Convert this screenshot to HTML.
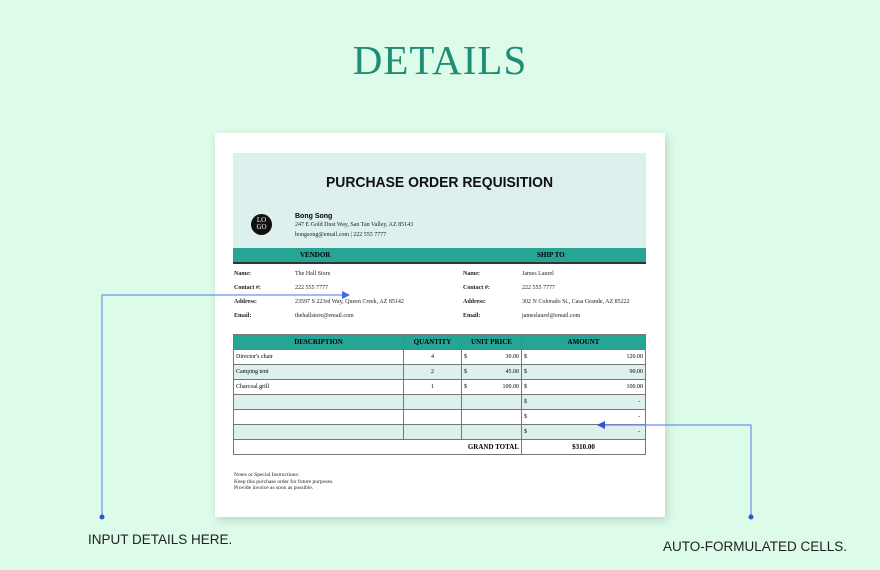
<!DOCTYPE html><html><head><style>
body{margin:0;width:880px;height:570px;background:#dcfbe8;position:relative;overflow:hidden;font-family:"Liberation Serif",serif}
.a{position:absolute}
.t{position:absolute;left:0;width:880px;top:36px;text-align:center;font-size:41px;color:#1f8c76;letter-spacing:1px}
.card{left:215px;top:133px;width:450px;height:384px;background:#fff;box-shadow:2px 3px 8px rgba(0,0,0,.15)}
.s{font-size:6px;color:#222}
.b{font-weight:bold}
table{border-collapse:collapse;position:absolute;left:233px;top:334px;width:413px;font-size:6px}
td{border:1px solid #777;height:14px;padding:0 2px}
tr.h td{background:#26a596;font-weight:bold;text-align:center;font-size:7px}
tr.g td{background:#ddf0ee}
.r{text-align:right}
</style></head><body>
<div class="t">DETAILS</div>
<div class="a card"></div>
<div class="a" style="left:233px;top:153px;width:413px;height:95px;background:#ddf0ee"></div>
<div class="a" style="left:233px;top:174px;width:413px;text-align:center;font:bold 15px 'Liberation Sans',sans-serif;color:#111;transform:scaleX(0.93)">PURCHASE ORDER REQUISITION</div>
<div class="a" style="left:251px;top:214px;width:21px;height:21px;border-radius:50%;background:#111;color:#fff;font-size:7px;line-height:7px;text-align:center;padding-top:3px;box-sizing:border-box">LO<br>GO</div>
<div class="a b" style="left:295px;top:213px;font:bold 7px 'Liberation Sans',sans-serif">Bong Song</div>
<div class="a s" style="left:295px;top:222px">247 E Gold Dust Way, San Tan Valley, AZ 85143</div>
<div class="a s" style="left:295px;top:232px">bongsong@email.com | 222 555 7777</div>
<div class="a" style="left:233px;top:248px;width:413px;height:14px;background:#26a596;border-bottom:2px solid #333"></div>
<div class="a b" style="left:300px;top:251px;font-size:7px">VENDOR</div>
<div class="a b" style="left:537px;top:251px;font-size:7px">SHIP TO</div>
<div class="a s b" style="left:234px;top:267px;line-height:14px">Name:<br>Contact #:<br>Address:<br>Email:</div>
<div class="a s" style="left:295px;top:267px;line-height:14px">The Hall Store<br>222 555 7777<br>23597 S 223rd Way, Queen Creek, AZ 85142<br>thehallstore@email.com</div>
<div class="a s b" style="left:463px;top:267px;line-height:14px">Name:<br>Contact #:<br>Address:<br>Email:</div>
<div class="a s" style="left:522px;top:267px;line-height:14px">James Laurel<br>222 555 7777<br>302 N Colorado St., Casa Grande, AZ 85222<br>jameslaurel@email.com</div>
<table>
<tr class="h"><td style="width:165px">DESCRIPTION</td><td style="width:53px">QUANTITY</td><td style="width:55px">UNIT PRICE</td><td>AMOUNT</td></tr>
<tr><td>Director's chair</td><td style="text-align:center">4</td><td>$<span style="float:right">30.00</span></td><td>$<span style="float:right">120.00</span></td></tr>
<tr class="g"><td>Camping tent</td><td style="text-align:center">2</td><td>$<span style="float:right">45.00</span></td><td>$<span style="float:right">90.00</span></td></tr>
<tr><td>Charcoal grill</td><td style="text-align:center">1</td><td>$<span style="float:right">100.00</span></td><td>$<span style="float:right">100.00</span></td></tr>
<tr class="g"><td></td><td></td><td></td><td>$<span style="float:right">-&nbsp;&nbsp;</span></td></tr>
<tr><td></td><td></td><td></td><td>$<span style="float:right">-&nbsp;&nbsp;</span></td></tr>
<tr class="g"><td></td><td></td><td></td><td>$<span style="float:right">-&nbsp;&nbsp;</span></td></tr>
<tr><td colspan="3" class="r b" style="font-size:7px">GRAND TOTAL</td><td class="b" style="text-align:center;font-size:7px">$310.00</td></tr>
</table>
<div class="a s" style="left:234px;top:472px;font-size:5.5px;line-height:6.5px">Notes or Special Instructions:<br>Keep this purchase order for future purposes.<br>Provide invoice as soon as possible.</div>
<svg class="a" style="left:0;top:0" width="880" height="570">
<path d="M102 517V295H345" stroke="#6f8ff0" stroke-width="1.2" fill="none"/><path d="M350 295l-8-4v8z" fill="#4169e1"/>
<circle cx="102" cy="517" r="2.5" fill="#2a56d8"/>
<path d="M751 517V425H602" stroke="#6f8ff0" stroke-width="1.2" fill="none"/><path d="M597 425l8-4v8z" fill="#2a56d8"/>
<circle cx="751" cy="517" r="2.5" fill="#2a56d8"/>
</svg>
<div class="a" style="left:88px;top:532px;font:13.5px 'Liberation Sans',sans-serif;color:#222">INPUT DETAILS HERE.</div>
<div class="a" style="left:663px;top:539px;font:13.5px 'Liberation Sans',sans-serif;color:#222">AUTO-FORMULATED CELLS.</div>
</body></html>
